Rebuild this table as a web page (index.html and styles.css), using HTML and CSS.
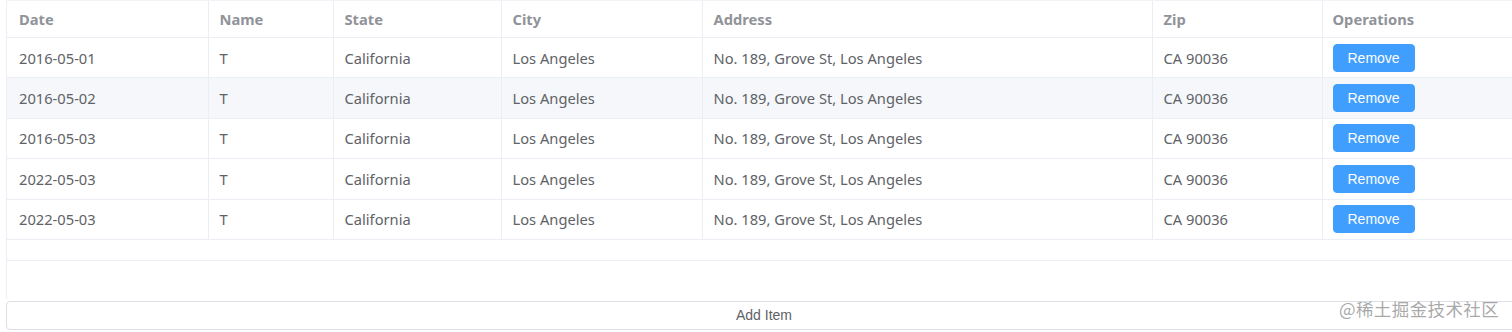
FILE: index.html
```html
<!DOCTYPE html>
<html>
<head>
<meta charset="utf-8">
<link rel="stylesheet" href="styles.css">
</head>
<body>
<div class="page">
  <div class="table-box">
    <table class="grid">
      <colgroup>
        <col class="c1"><col class="c2"><col class="c3"><col class="c4"><col class="c5"><col class="c6"><col class="c7">
      </colgroup>
      <thead>
        <tr><th>Date</th><th>Name</th><th>State</th><th>City</th><th>Address</th><th>Zip</th><th>Operations</th></tr>
      </thead>
      <tbody>
        <tr><td>2016-05-01</td><td>T</td><td>California</td><td>Los Angeles</td><td>No. 189, Grove St, Los Angeles</td><td>CA 90036</td><td><button class="btn">Remove</button></td></tr>
        <tr class="striped"><td>2016-05-02</td><td>T</td><td>California</td><td>Los Angeles</td><td>No. 189, Grove St, Los Angeles</td><td>CA 90036</td><td><button class="btn">Remove</button></td></tr>
        <tr><td>2016-05-03</td><td>T</td><td>California</td><td>Los Angeles</td><td>No. 189, Grove St, Los Angeles</td><td>CA 90036</td><td><button class="btn">Remove</button></td></tr>
        <tr><td>2022-05-03</td><td>T</td><td>California</td><td>Los Angeles</td><td>No. 189, Grove St, Los Angeles</td><td>CA 90036</td><td><button class="btn">Remove</button></td></tr>
        <tr><td>2022-05-03</td><td>T</td><td>California</td><td>Los Angeles</td><td>No. 189, Grove St, Los Angeles</td><td>CA 90036</td><td><button class="btn">Remove</button></td></tr>
      </tbody>
    </table>
    <div class="append"></div>
  </div>
  <button class="add">Add Item</button>
</div>
<div class="watermark">@稀土掘金技术社区</div>
</body>
</html>
```
FILE: styles.css
```css
html, body {
  margin: 0;
  padding: 0;
  background: #fff;
  overflow: hidden;
}
body {
  width: 1512px;
  height: 332px;
  position: relative;
  font-family: "Noto Sans", "Noto Sans CJK SC", sans-serif;
  font-size: 14.7px;
  color: #606266;
}
.page {
  margin-left: 6px;
  width: 1540px;
}
.table-box {
  height: 299px;
  border-left: 1px solid #ebeef5;
  border-top: 1px solid #f2f3f7;
  box-sizing: border-box;
}
.grid {
  border-collapse: collapse;
  table-layout: fixed;
  width: 1539px;
}
.c1 { width: 201px; }
.c2 { width: 125px; }
.c3 { width: 168px; }
.c4 { width: 201px; }
.c5 { width: 450px; }
.c6 { width: 170px; }
.c7 { width: 224px; }
.grid th, .grid td {
  text-align: left;
  padding: 0 0 0 11px;
  border-right: 1px solid #ebeef5;
  border-bottom: 1px solid #ebeef5;
  white-space: nowrap;
  overflow: hidden;
}
.grid th:first-child, .grid td:first-child {
  padding-left: 12px;
}
.grid th:last-child, .grid td:last-child {
  padding-left: 10px;
}
.grid th {
  height: 35px;
  padding-bottom: 1px;
  color: #909399;
  font-weight: 700;
}
.grid td {
  height: 39.4px;
}
.grid tr.striped td {
  background: #f5f7fa;
}
.btn {
  font-family: "Liberation Sans", Arial, sans-serif;
  font-size: 14px;
  color: #fff;
  background: #409eff;
  border: 1px solid #409eff;
  border-radius: 4px;
  height: 28px;
  padding: 0 14px;
  line-height: 26px;
  display: block;
}
.append {
  height: 20px;
  border-bottom: 1px solid #ebeef5;
}
.add {
  display: block;
  margin-top: 2px;
  width: 1540px;
  height: 29px;
  border: 1px solid #dcdfe6;
  border-radius: 4px;
  background: #fff;
  font-family: "Liberation Sans", Arial, sans-serif;
  font-size: 14px;
  color: #606266;
  text-align: left;
  padding: 0 0 0 729px;
  line-height: 27px;
}
.watermark {
  position: absolute;
  left: 1339px;
  top: 298px;
  font-family: "Noto Sans CJK SC", sans-serif;
  font-size: 17.5px;
  color: rgba(140, 140, 140, 0.75);
  letter-spacing: 0.4px;
  line-height: 22px;
}
```
